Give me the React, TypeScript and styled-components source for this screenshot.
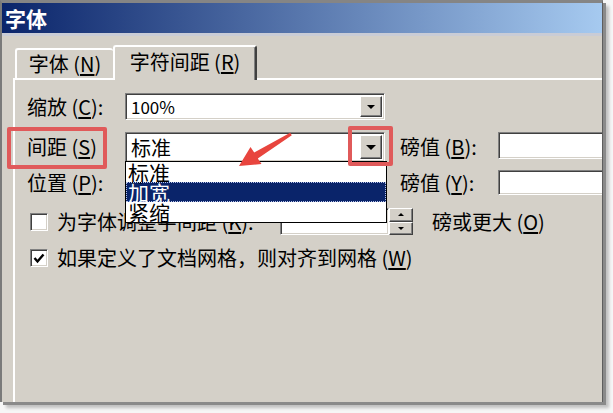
import React from 'react';
import styled, { createGlobalStyle } from 'styled-components';

const GlobalStyle = createGlobalStyle`
  html, body {
    margin: 0;
    padding: 0;
    background: #f6f6f6;
  }
  body {
    font-family: "Noto Sans CJK SC", "Noto Sans", sans-serif;
    color: #000;
  }
`;

const Page = styled.div`
  width: 613px;
  height: 413px;
  overflow: hidden;
  background: #f6f6f6;
`;

const Window = styled.div`
  width: 600px;
  height: 399px;
  border-left: 2px solid #7a7a7a;
  border-top: 3px solid #858585;
  border-right: 1px solid #5e5e5e;
  background: #d4d0c8;
  box-shadow: 3px 3px 0 #8a8a8a, 6px 6px 3px rgba(0, 0, 0, 0.22);
  overflow: hidden;
  display: flex;
  flex-direction: column;
`;

const TitleBar = styled.div`
  flex-shrink: 0;
  height: 30px;
  padding-left: 3px;
  background: linear-gradient(90deg, #0a246a 0%, #a6caf0 100%);
  border-bottom: 3px solid #c9ccd6;
  color: #fff;
  font-size: 21px;
  font-weight: bold;
  line-height: 30px;
`;

const Body = styled.div`
  flex: 1;
  display: flex;
  flex-direction: column;
  padding: 9px 0 0 11px;
`;

const TabStrip = styled.div`
  display: flex;
  align-items: flex-end;
  height: 33px;
  padding-left: 2px;
`;

const Tab = styled.div<{ $active?: boolean }>`
  position: relative;
  z-index: ${(p) => (p.$active ? 2 : 1)};
  box-sizing: border-box;
  width: ${(p) => (p.$active ? 144 : 98)}px;
  height: ${(p) => (p.$active ? 35 : 30)}px;
  margin-bottom: ${(p) => (p.$active ? -2 : 0)}px;
  background: #d4d0c8;
  border-top: 2px solid #fff;
  border-left: 2px solid #fff;
  border-right: ${(p) => (p.$active ? '2px solid #404040' : 'none')};
  box-shadow: ${(p) => (p.$active ? 'inset -1px 0 #808080' : 'none')};
  border-radius: 3px 3px 0 0;
  font-size: 20px;
  line-height: ${(p) => (p.$active ? 30 : 27)}px;
  text-align: center;
  white-space: nowrap;
`;

const Key = styled.span`
  text-decoration: underline;
  text-underline-offset: 2px;
`;

const Panel = styled.div`
  flex: 1;
  border-top: 2px solid #fff;
  border-left: 2px solid #fff;
  padding: 13px 0 0 12px;
  display: flex;
  flex-direction: column;
`;

const Row = styled.div<{ $h: number; $mt?: number }>`
  display: flex;
  align-items: center;
  height: ${(p) => p.$h}px;
  margin-top: ${(p) => p.$mt ?? 0}px;
  white-space: nowrap;
`;

const Label = styled.div<{ $w?: number; $ml?: number }>`
  position: relative;
  flex-shrink: 0;
  width: ${(p) => p.$w ?? 98}px;
  margin-left: ${(p) => p.$ml ?? 0}px;
  font-size: 20px;
  line-height: 24px;
`;

const sunken = `
  box-sizing: border-box;
  background: #fff;
  border: 1px solid;
  border-color: #808080 #fff #fff #808080;
  box-shadow: inset 1px 1px #404040, inset -1px -1px #d4d0c8;
`;

const Combo = styled.div`
  ${sunken}
  position: relative;
  flex-shrink: 0;
  width: 260px;
  height: 100%;
  display: flex;
  align-items: stretch;
  padding: 2px;
`;

const ComboText = styled.div<{ $size: number }>`
  flex: 1;
  padding-left: 3px;
  font-size: ${(p) => p.$size}px;
  display: flex;
  align-items: center;
`;

const raised = `
  box-sizing: border-box;
  background: #d4d0c8;
  border: 1px solid;
  border-color: #fff #404040 #404040 #fff;
  box-shadow: inset -1px -1px #808080;
`;

const DropButton = styled.div`
  ${raised}
  width: 22px;
  display: flex;
  align-items: center;
  justify-content: center;
`;

const ArrowDown = styled.span<{ $w?: number }>`
  width: 0;
  height: 0;
  border-left: ${(p) => (p.$w ?? 9) / 2}px solid transparent;
  border-right: ${(p) => (p.$w ?? 9) / 2}px solid transparent;
  border-top: ${(p) => Math.ceil((p.$w ?? 9) / 2)}px solid #000;
`;

const ArrowUp = styled.span`
  width: 0;
  height: 0;
  border-left: 3px solid transparent;
  border-right: 3px solid transparent;
  border-bottom: 3px solid #000;
`;

const TextInput = styled.div<{ $h: number }>`
  ${sunken}
  flex-shrink: 0;
  align-self: flex-start;
  width: 130px;
  height: ${(p) => p.$h}px;
`;

const ListBox = styled.div`
  position: absolute;
  z-index: 5;
  left: -1px;
  top: 100%;
  box-sizing: border-box;
  width: 262px;
  height: 62px;
  background: #fff;
  border: 1px solid #000;
  overflow: visible;
`;

const ListItem = styled.div<{ $selected?: boolean }>`
  box-sizing: border-box;
  height: 20px;
  padding-left: 2px;
  font-size: 21px;
  line-height: 20px;
  color: ${(p) => (p.$selected ? '#fff' : '#000')};
  background: ${(p) => (p.$selected ? '#0a246a' : 'transparent')};
  outline: ${(p) => (p.$selected ? '1px dotted #b8c4e8' : 'none')};
  outline-offset: -1px;
`;

const Callout = styled.div<{ $x: number; $y: number; $w: number; $h: number }>`
  position: absolute;
  z-index: 6;
  left: ${(p) => p.$x}px;
  top: ${(p) => p.$y}px;
  box-sizing: border-box;
  width: ${(p) => p.$w}px;
  height: ${(p) => p.$h}px;
  border: 4px solid #e05a5a;
  border-radius: 2px;
  pointer-events: none;
`;

const Pointer = styled.svg`
  position: absolute;
  z-index: 6;
  left: 100px;
  top: -5px;
  overflow: visible;
`;

const CheckItem = styled.div<{ $w?: number }>`
  display: flex;
  align-items: center;
  flex-shrink: 0;
  width: ${(p) => (p.$w ? `${p.$w}px` : 'auto')};
  padding-left: 3px;
  box-sizing: border-box;
`;

const Box = styled.div`
  ${sunken}
  width: 18px;
  height: 18px;
  flex-shrink: 0;
  display: flex;
  align-items: center;
  justify-content: center;
`;

const CheckText = styled.span`
  margin-left: 9px;
  font-size: 20px;
  line-height: 24px;
`;

const Spin = styled.div`
  display: flex;
  flex-shrink: 0;
  width: 133px;
  height: 100%;
`;

const SpinField = styled.div`
  ${sunken}
  flex: 1;
`;

const SpinButtons = styled.div`
  display: flex;
  flex-direction: column;
  width: 24px;
`;

const SpinButton = styled.div`
  ${raised}
  flex: 1;
  display: flex;
  align-items: center;
  justify-content: center;
`;

const Check = () => (
  <svg width="12" height="12" viewBox="0 0 12 12">
    <polyline points="1.5,6 4.5,9.5 10.5,2.5" fill="none" stroke="#000" strokeWidth="2.4" />
  </svg>
);

const spacingOptions = ['标准', '加宽', '紧缩'];

export default function App() {
  return (
    <Page>
      <GlobalStyle />
      <Window>
        <TitleBar>字体</TitleBar>
        <Body>
          <TabStrip>
            <Tab>
              字体 (<Key>N</Key>)
            </Tab>
            <Tab $active>
              字符间距 (<Key>R</Key>)
            </Tab>
          </TabStrip>
          <Panel>
            <Row $h={27}>
              <Label>
                缩放 (<Key>C</Key>):
              </Label>
              <Combo>
                <ComboText $size={17}>100%</ComboText>
                <DropButton>
                  <ArrowDown $w={8} />
                </DropButton>
              </Combo>
            </Row>

            <Row $h={30} $mt={12}>
              <Label>
                间距 (<Key>S</Key>)
                <Callout $x={-20} $y={-8} $w={100} $h={42} />
              </Label>
              <Combo>
                <ComboText $size={20}>标准</ComboText>
                <DropButton>
                  <ArrowDown $w={10} />
                </DropButton>
                <Callout $x={222} $y={-7} $w={45} $h={40} />
                <Pointer width="75" height="50" viewBox="0 0 75 50">
                  <polygon
                    points="13,38 35.5,36 31.8,30.5 65.8,7.3 64.2,4.7 28.2,24.5 24.5,19"
                    fill="#e8453e"
                  />
                </Pointer>
                <ListBox>
                  {spacingOptions.map((o, i) => (
                    <ListItem key={o} $selected={i === 1}>
                      {o}
                    </ListItem>
                  ))}
                </ListBox>
              </Combo>
              <Label $ml={15}>
                磅值 (<Key>B</Key>):
              </Label>
              <TextInput $h={27} />
            </Row>

            <Row $h={25} $mt={8}>
              <Label>
                位置 (<Key>P</Key>):
              </Label>
              <Combo>
                <ComboText $size={20}>标准</ComboText>
              </Combo>
              <Label $ml={15}>
                磅值 (<Key>Y</Key>):
              </Label>
              <TextInput $h={25} />
            </Row>

            <Row $h={27} $mt={13}>
              <CheckItem $w={253}>
                <Box />
                <CheckText>
                  为字体调整字间距 (<Key>K</Key>):
                </CheckText>
              </CheckItem>
              <Spin>
                <SpinField />
                <SpinButtons>
                  <SpinButton>
                    <ArrowUp />
                  </SpinButton>
                  <SpinButton>
                    <ArrowDown $w={6} />
                  </SpinButton>
                </SpinButtons>
              </Spin>
              <Label $w={120} $ml={19}>
                磅或更大 (<Key>O</Key>)
              </Label>
            </Row>

            <Row $h={21} $mt={12}>
              <CheckItem>
                <Box>
                  <Check />
                </Box>
                <CheckText>
                  如果定义了文档网格，则对齐到网格 (<Key>W</Key>)
                </CheckText>
              </CheckItem>
            </Row>
          </Panel>
        </Body>
      </Window>
    </Page>
  );
}
